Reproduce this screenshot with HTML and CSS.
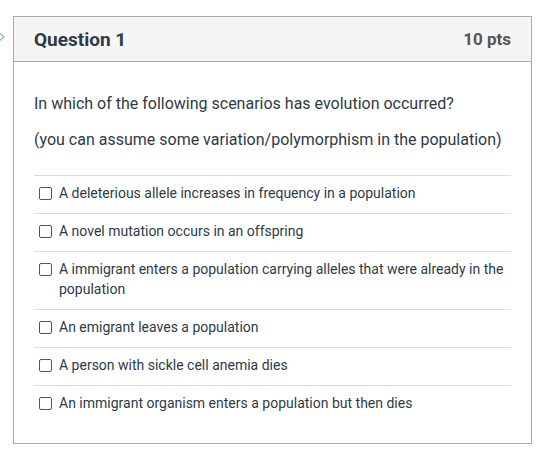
FILE: index.html
```html
<!DOCTYPE html>
<html>
<head>
<meta charset="utf-8">
<link rel="stylesheet" href="styles.css">
</head>
<body>
<svg class="nav-arrow" width="8" height="14" viewBox="0 0 8 14"><path d="M-3 1 L4 7 L-3 13" fill="none" stroke="#9db8cf" stroke-width="1.3"/></svg>
<div class="question">
  <div class="header">
    <span class="title">Question 1</span>
    <span class="pts">10 pts</span>
  </div>
  <div class="content">
    <p class="text">In which of the following scenarios has evolution occurred?</p>
    <p class="text">(you can assume some variation/polymorphism in the population)</p>
    <div class="answers">
      <label class="answer"><span class="box"></span><span class="label">A deleterious allele increases in frequency in a population</span></label>
      <label class="answer"><span class="box"></span><span class="label">A novel mutation occurs in an offspring</span></label>
      <label class="answer"><span class="box"></span><span class="label">A immigrant enters a population carrying alleles that were already in the population</span></label>
      <label class="answer"><span class="box"></span><span class="label">An emigrant leaves a population</span></label>
      <label class="answer"><span class="box"></span><span class="label">A person with sickle cell anemia dies</span></label>
      <label class="answer"><span class="box"></span><span class="label">An immigrant organism enters a population but then dies</span></label>
    </div>
  </div>
</div>
</body>
</html>
```
FILE: styles.css
```css
html, body {
  margin: 0;
  padding: 0;
  background: #fff;
  font-family: Roboto, "Liberation Sans", sans-serif;
  color: #2d3b45;
}
body {
  position: relative;
  padding: 16px 0 0 13px;
}
.nav-arrow {
  position: absolute;
  left: 0;
  top: 30px;
}
.question {
  width: 517px;
  border: 1px solid #aaaaaa;
}
.header {
  display: flex;
  justify-content: space-between;
  align-items: center;
  height: 44px;
  padding: 0 20px 0 20px;
  background: #f5f5f5;
  border-bottom: 1px solid #aaaaaa;
}
.title {
  font-weight: 700;
  font-size: 19px;
}
.pts {
  font-weight: 700;
  color: #555;
  font-size: 17px;
}
.content {
  padding: 30px 20px 20px 20px;
}
.text {
  margin: 0 0 12px 0;
  font-size: 16px;
  line-height: 24px;
}
.answers {
  margin-top: 23px;
  border-top: 1px solid #dddddd;
}
.answer {
  display: flex;
  align-items: flex-start;
  padding: 7px 0 10px 5px;
  border-bottom: 1px solid #dddddd;
  font-size: 14px;
  line-height: 20px;
}
.answer:last-child {
  border-bottom: none;
}
.box {
  flex: none;
  width: 11px;
  height: 11px;
  border: 1px solid #555;
  border-radius: 2px;
  margin: 4px 7px 0 0;
}
.label {
  flex: 1;
}
```
